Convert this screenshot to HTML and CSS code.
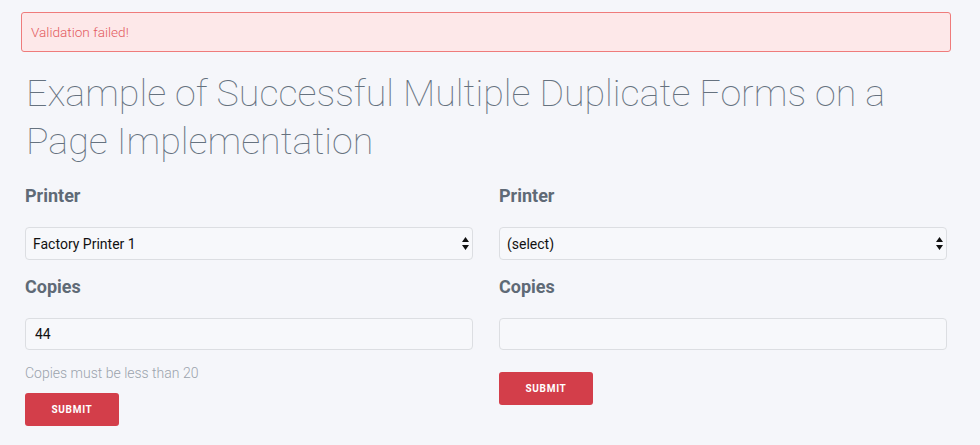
FILE: index.html
```html
<!DOCTYPE html>
<html lang="en">
<head>
<meta charset="utf-8">
<title>Multiple Duplicate Forms</title>
<link rel="stylesheet" href="styles.css">
</head>
<body>
<main class="page">
  <div class="alert">Validation failed!</div>
  <h1 class="title">Example of Successful Multiple Duplicate Forms on a Page Implementation</h1>
  <div class="forms">
    <form class="form">
      <label class="label">Printer</label>
      <div class="select-wrap">
        <select class="control select">
          <option>Factory Printer 1</option>
        </select>
        <svg class="arrows" width="7" height="13" viewBox="0 0 7 13"><path d="M3.5 0 L7 5 L0 5 Z M0 8 L7 8 L3.5 13 Z" fill="#111"/></svg>
      </div>
      <label class="label label-next">Copies</label>
      <input class="control input" type="text" value="44">
      <div class="help">Copies must be less than 20</div>
      <button class="btn" type="button">SUBMIT</button>
    </form>
    <form class="form">
      <label class="label">Printer</label>
      <div class="select-wrap">
        <select class="control select">
          <option>(select)</option>
        </select>
        <svg class="arrows" width="7" height="13" viewBox="0 0 7 13"><path d="M3.5 0 L7 5 L0 5 Z M0 8 L7 8 L3.5 13 Z" fill="#111"/></svg>
      </div>
      <label class="label label-next">Copies</label>
      <input class="control input" type="text" value="">
      <button class="btn" type="button">SUBMIT</button>
    </form>
  </div>
</main>
</body>
</html>
```

FILE: styles.css
```css
html, body {
  margin: 0;
  padding: 0;
  background: #f5f6fa;
}
body {
  font-family: Roboto, "Noto Sans", sans-serif;
  color: #5d6873;
}
.page {
  width: 930px;
  padding: 12px 0 0 21px;
}
.alert {
  box-sizing: border-box;
  height: 40px;
  border: 1px solid #ef7b7b;
  border-radius: 3px;
  background: #fde8e9;
  color: #e35b5e;
  font-size: 13.6px;
  font-weight: 300;
  line-height: 38px;
  padding: 0 9px;
}
.title {
  margin: 17px 0 0 5px;
  font-size: 37.6px;
  font-weight: 100;
  line-height: 48px;
  color: #66727f;
}
.forms {
  display: grid;
  grid-template-columns: 448px 448px;
  column-gap: 26px;
  padding: 0 4px;
  margin-top: 21px;
}
.form {
  display: flex;
  flex-direction: column;
  align-items: flex-start;
  margin: 0;
}
.label {
  display: block;
  font-size: 18px;
  font-weight: 700;
  line-height: 20px;
  color: #5f6a76;
}
.label-next {
  margin-top: 17px;
}
.select-wrap {
  position: relative;
  width: 100%;
  margin-top: 21px;
}
.control {
  box-sizing: border-box;
  width: 100%;
  margin: 0;
  border: 1px solid #dcdee2;
  border-radius: 4px;
  background: #f7f8fb;
  font-family: Roboto, "Noto Sans", sans-serif;
  font-size: 14px;
  color: #111;
  outline: none;
}
.select {
  -webkit-appearance: none;
  appearance: none;
  height: 33px;
  padding: 0 20px 0 7px;
}
.arrows {
  position: absolute;
  right: 4px;
  top: 10px;
}
.input {
  height: 32px;
  margin-top: 21px;
  padding: 0 9px;
}
.help {
  margin-top: 13px;
  font-size: 14px;
  font-weight: 300;
  line-height: 20px;
  color: #9ba3ac;
}
.btn {
  margin-top: 22px;
  width: 94px;
  height: 33px;
  border: 0;
  border-radius: 3px;
  background: #d33e4a;
  color: #fff;
  font-family: Roboto, "Noto Sans", sans-serif;
  font-size: 10px;
  font-weight: 700;
  letter-spacing: 0.7px;
  padding: 0;
}
.help + .btn {
  margin-top: 10px;
}
```
